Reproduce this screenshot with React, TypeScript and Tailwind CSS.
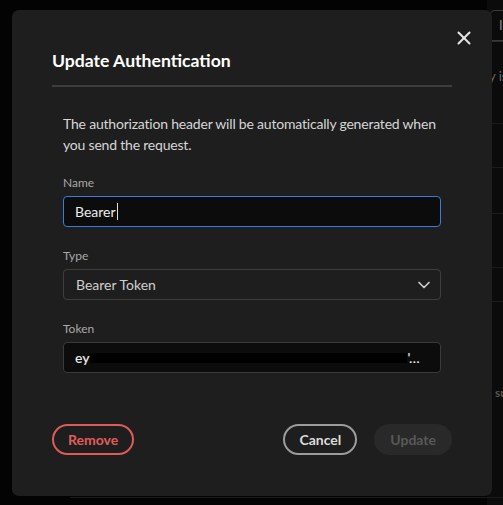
import { X, ChevronDown } from 'lucide-react';

const Backdrop = () => {
  return (
    <div className="absolute left-[487px] top-0 h-full w-[40px] bg-[#0b0b0b] text-[13px] text-[#777] font-['Lato',sans-serif]">
      <div className="mt-[10px] ml-[2px] h-[31px] rounded-t-md border border-[#3a3a3a] pl-[9px] pt-[5px] text-[#8a8a8a]">In</div>
      <div className="h-px bg-[#2c2c2c]" />
      <div className="mt-[25px] pl-[2px] text-[#6a6a6a]">y is</div>
      <div className="mt-[36px] h-px bg-[#1c1c1c]" />
      <div className="mt-[43px] h-px bg-[#1c1c1c]" />
      <div className="mt-[45px] h-px bg-[#1c1c1c]" />
      <div className="mt-[53px] h-px bg-[#1c1c1c]" />
      <div className="mt-[33px] h-px bg-[#1c1c1c]" />
      <div className="mt-[82px] pl-[8px] text-[12px] font-bold text-[#555]">su</div>
    </div>
  );
};

const Field = ({ label, children }: { label: string; children: React.ReactNode }) => (
  <div className="flex flex-col gap-[5px]">
    <span className="text-[12px] leading-[16px] text-[#a8a8a8]">{label}</span>
    {children}
  </div>
);

const App = () => {
  return (
    <div className="relative h-[505px] w-[503px] overflow-hidden bg-[#030303] font-['Lato',sans-serif]">
      <Backdrop />
      <div className="absolute left-0 right-0 bottom-[7px] ml-[70px] h-px bg-[#1a1a1a]" />

      {/* Dialog */}
      <div className="relative ml-[12px] mt-[10px] flex h-[486px] w-[480px] flex-col rounded-[7px] bg-[#1e1e1e] px-[40px]">
        <button className="absolute right-[17px] top-[17px] text-[#e6e6e6]">
          <X size={22} strokeWidth={2.2} />
        </button>

        <h2 className="mt-[39px] text-[17.6px] font-bold leading-[24px] text-white">Update Authentication</h2>
        <div className="mt-[12px] h-[2px] bg-[#3d3d3d]" />

        <div className="flex flex-col px-[11px]">
          <p className="mt-[26px] text-[14px] leading-[21px] tracking-[-0.2px] text-[#d6d6d6]">
            The authorization header will be automatically generated when you send the request.
          </p>

          <div className="mt-[20px] flex flex-col gap-[21px]">
            <Field label="Name">
              <div className="flex h-[31px] items-center rounded-[4px] border border-[#3b7be0] bg-[#0c0c0c] px-[11px] text-[14px] text-[#ececec]">
                Bearer
                <span className="ml-px h-[17px] w-px bg-[#e0e0e0]" />
              </div>
            </Field>

            <Field label="Type">
              <div className="flex h-[31px] items-center justify-between rounded-[4px] border border-[#3e3e3e] bg-[#1e1e1e] pl-[12px] pr-[6px] text-[14px] text-[#cfcfcf]">
                <span>Bearer Token</span>
                <ChevronDown size={20} strokeWidth={2} className="text-[#cfcfcf]" />
              </div>
            </Field>

            <Field label="Token">
              <div className="flex h-[31px] items-center rounded-[4px] border border-[#3a3a3a] bg-[#0c0c0c] px-[11px] text-[14px] font-semibold text-[#e6e6e6]">
                <span>ey</span>
                <span className="h-[10px] w-[317px] bg-black" />
                <span className="ml-[1px]">'…</span>
              </div>
            </Field>
          </div>
        </div>

        <div className="mt-auto mb-[41px] flex items-center">
          <button className="h-[31px] rounded-full border-2 border-[#e05a5a] px-[14px] text-[14px] font-bold text-[#e25c5c]">
            Remove
          </button>
          <div className="ml-auto flex items-center gap-[17px]">
            <button className="h-[31px] rounded-full border-2 border-[#9c9c9c] px-[14px] text-[14px] font-bold text-[#dcdcdc]">
              Cancel
            </button>
            <button className="h-[31px] rounded-full bg-[#292929] px-[16px] text-[14px] font-bold text-[#585858]">
              Update
            </button>
          </div>
        </div>
      </div>
    </div>
  );
};

export default App;
